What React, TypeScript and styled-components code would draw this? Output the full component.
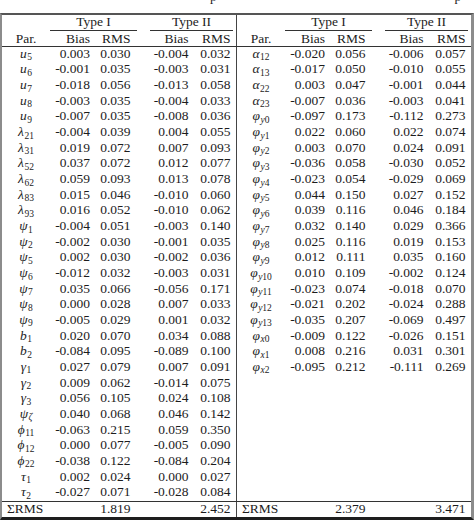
import React from "react";
import styled, { createGlobalStyle } from "styled-components";

const GlobalStyle = createGlobalStyle`
  html, body {
    margin: 0;
    padding: 0;
    background: #fff;
  }
  body {
    font-family: "Liberation Serif", "DejaVu Serif", serif;
    color: #1c1c1c;
  }
`;

// par base, par sub, bias I, rms I, bias II, rms II
const leftRows = `u 5 0.003 0.030 -0.004 0.032
u 6 -0.001 0.035 -0.003 0.031
u 7 -0.018 0.056 -0.013 0.058
u 8 -0.003 0.035 -0.004 0.033
u 9 -0.007 0.035 -0.008 0.036
λ 21 -0.004 0.039 0.004 0.055
λ 31 0.019 0.072 0.007 0.093
λ 52 0.037 0.072 0.012 0.077
λ 62 0.059 0.093 0.013 0.078
λ 83 0.015 0.046 -0.010 0.060
λ 93 0.016 0.052 -0.010 0.062
ψ 1 -0.004 0.051 -0.003 0.140
ψ 2 -0.002 0.030 -0.001 0.035
ψ 5 0.002 0.030 -0.002 0.036
ψ 6 -0.012 0.032 -0.003 0.031
ψ 7 0.035 0.066 -0.056 0.171
ψ 8 0.000 0.028 0.007 0.033
ψ 9 -0.005 0.029 0.001 0.032
b 1 0.020 0.070 0.034 0.088
b 2 -0.084 0.095 -0.089 0.100
γ 1 0.027 0.079 0.007 0.091
γ 2 0.009 0.062 -0.014 0.075
γ 3 0.056 0.105 0.024 0.108
ψ ζ 0.040 0.068 0.046 0.142
ϕ 11 -0.063 0.215 0.059 0.350
ϕ 12 0.000 0.077 -0.005 0.090
ϕ 22 -0.038 0.122 -0.084 0.204
τ 1 0.002 0.024 0.000 0.027
τ 2 -0.027 0.071 -0.028 0.084`;

const rightRows = `α 12 -0.020 0.056 -0.006 0.057
α 13 -0.017 0.050 -0.010 0.055
α 22 0.003 0.047 -0.001 0.044
α 23 -0.007 0.036 -0.003 0.041
φ y0 -0.097 0.173 -0.112 0.273
φ y1 0.022 0.060 0.022 0.074
φ y2 0.003 0.070 0.024 0.091
φ y3 -0.036 0.058 -0.030 0.052
φ y4 -0.023 0.054 -0.029 0.069
φ y5 0.044 0.150 0.027 0.152
φ y6 0.039 0.116 0.046 0.184
φ y7 0.032 0.140 0.029 0.366
φ y8 0.025 0.116 0.019 0.153
φ y9 0.012 0.111 0.035 0.160
φ y10 0.010 0.109 -0.002 0.124
φ y11 -0.023 0.074 -0.018 0.070
φ y12 -0.021 0.202 -0.024 0.288
φ y13 -0.035 0.207 -0.069 0.497
φ x0 -0.009 0.122 -0.026 0.151
φ x1 0.008 0.216 0.031 0.301
φ x2 -0.095 0.212 -0.111 0.269`;

const parse = (s: string) => s.split("\n").map((l) => l.trim().split(/\s+/));

const left = parse(leftRows);
const right = parse(rightRows);
const ROWS = left.length;

// right padding of the value columns: bias I, rms I, gap, bias II, rms II
const pads = [3, 6.5, 0, 3.5, 5.5];

const Page = styled.div`
  width: 474px;
`;

const Caption = styled.div`
  height: 13px;
  overflow: hidden;
  display: flex;
  align-items: flex-end;
`;

const Frag = styled.span<{ $ml: number }>`
  font-size: 13px;
  line-height: 13px;
  margin-left: ${(p) => p.$ml}px;
  margin-bottom: 10.5px;
`;

const Sheet = styled.div`
  display: grid;
  grid-template-columns: 48px 43px 44px 11px 44px 44px 1px 48px 43px 44px 11px 44px 44px;
  grid-template-rows: 16px 15px 1px repeat(${ROWS}, 15.66px) 1px 15px;
  border-top: 2px solid #555;
  border-left: 2px solid #8c8c8c;
  border-right: 3px solid #8c8c8c;
  border-bottom: 3px solid #1e1e1e;
`;

const Divider = styled.div`
  grid-column: 7;
  grid-row: 1 / -1;
  background: #444;
`;

const Rule = styled.div<{ $row: number }>`
  grid-column: 1 / -1;
  grid-row: ${(p) => p.$row};
  background: #333;
`;

const Cell = styled.div<{ $pad?: number; $center?: boolean; $lift?: number }>`
  display: flex;
  align-items: center;
  justify-content: ${(p) => (p.$center ? "center" : "flex-end")};
  padding: 0 ${(p) => p.$pad ?? 0}px ${(p) => p.$lift ?? 2}px 0;
  font-size: 13.5px;
  white-space: nowrap;
`;

const LabelCell = styled(Cell)`
  justify-content: flex-start;
  padding-left: 5px;
`;

const GroupHead = styled.div<{ $ml: number; $mr: number }>`
  grid-column: span 2;
  display: flex;
  align-items: center;
  justify-content: center;
  margin: 0 ${(p) => p.$mr}px 0 ${(p) => p.$ml}px;
  border-bottom: 1px solid #333;
  font-size: 13.5px;
  padding-bottom: 1px;
`;

const Mi = styled.i`
  font-style: italic;
`;

const Sub = styled.span`
  font-size: 9.5px;
  vertical-align: -2.5px;
  line-height: 0;
  margin-left: 0.5px;
`;

const Sym = ({ base, sub }: { base: string; sub: string }) => (
  <span>
    <Mi>{base}</Mi>
    <Sub>
      {sub.split("").map((c, i) =>
        /[a-zζ]/.test(c) ? <Mi key={i}>{c}</Mi> : <span key={i}>{c}</span>
      )}
    </Sub>
  </span>
);

const Half = ({ row }: { row?: string[] }) => {
  if (!row) {
    return (
      <>
        {[0, 1, 2, 3, 4, 5].map((i) => (
          <Cell key={i} />
        ))}
      </>
    );
  }
  return (
    <>
      <Cell $center>
        <Sym base={row[0]} sub={row[1]} />
      </Cell>
      <Cell $pad={pads[0]}>{row[2]}</Cell>
      <Cell $pad={pads[1]}>{row[3]}</Cell>
      <Cell />
      <Cell $pad={pads[3]}>{row[4]}</Cell>
      <Cell $pad={pads[4]}>{row[5]}</Cell>
    </>
  );
};

const HeadTop = () => (
  <>
    <Cell />
    <GroupHead $ml={0} $mr={0}>Type I</GroupHead>
    <Cell />
    <GroupHead $ml={2} $mr={3}>Type II</GroupHead>
  </>
);

const HeadSub = () => (
  <>
    <Cell $center $lift={0}>Par.</Cell>
    <Cell $pad={pads[0]} $lift={0}>Bias</Cell>
    <Cell $pad={pads[1]} $lift={0}>RMS</Cell>
    <Cell />
    <Cell $pad={pads[3]} $lift={0}>Bias</Cell>
    <Cell $pad={pads[4]} $lift={0}>RMS</Cell>
  </>
);

const SumRow = ({ a, b }: { a: string; b: string }) => (
  <>
    <LabelCell $lift={1}>ΣRMS</LabelCell>
    <Cell />
    <Cell $pad={pads[1]} $lift={1}>{a}</Cell>
    <Cell />
    <Cell />
    <Cell $pad={pads[4]} $lift={1}>{b}</Cell>
  </>
);

const App = () => (
  <Page>
    <GlobalStyle />
    <Caption>
      <Frag $ml={210}>p</Frag>
      <Frag $ml={238}>p</Frag>
    </Caption>
    <Sheet>
      <Divider />
      <Rule $row={3} />
      <Rule $row={4 + ROWS} />
      <HeadTop />
      <HeadTop />
      <HeadSub />
      <HeadSub />
      {left.map((row, i) => (
        <React.Fragment key={i}>
          <Half row={row} />
          <Half row={right[i]} />
        </React.Fragment>
      ))}
      <SumRow a="1.819" b="2.452" />
      <SumRow a="2.379" b="3.471" />
    </Sheet>
  </Page>
);

export default App;
